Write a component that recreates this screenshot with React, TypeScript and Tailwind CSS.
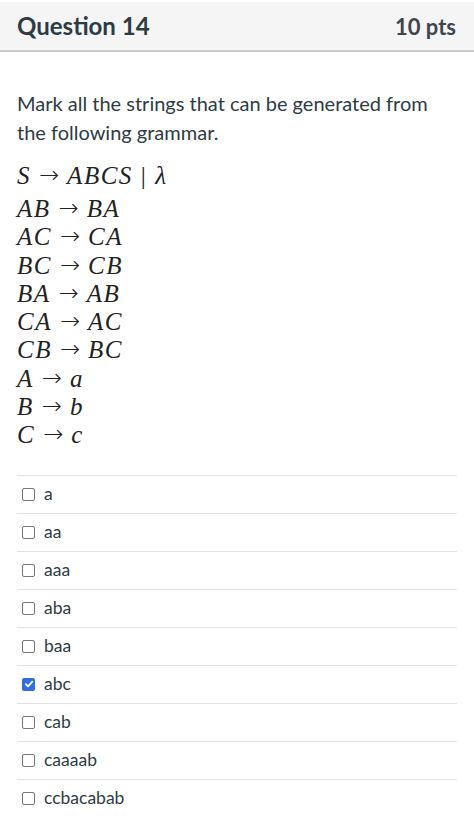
import React from 'react';

const rules: [string, string][] = [
  ['AB', 'BA'],
  ['AC', 'CA'],
  ['BC', 'CB'],
  ['BA', 'AB'],
  ['CA', 'AC'],
  ['CB', 'BC'],
  ['A', 'a'],
  ['B', 'b'],
  ['C', 'c']
];

const answers = ['a', 'aa', 'aaa', 'aba', 'baa', 'abc', 'cab', 'caaaab', 'ccbacabab'];

function Arrow() {
  return (
    <span className="not-italic mx-[8px] tracking-normal font-['DejaVu_Sans',sans-serif] text-[24px] font-light relative top-[-1px]">
      →
    </span>
  );
}

function CheckBox({ checked }: { checked: boolean }) {
  if (checked) {
    return (
      <span className="w-[13px] h-[13px] rounded-[2px] bg-[#2f6fe0] flex items-center justify-center shrink-0">
        <svg width="10" height="10" viewBox="0 0 10 10">
          <path d="M1.8 5.2 L4 7.4 L8.3 2.6" stroke="#fff" strokeWidth="1.8" fill="none" strokeLinecap="round" strokeLinejoin="round" />
        </svg>
      </span>
    );
  }
  return <span className="w-[13px] h-[13px] rounded-[2px] border border-[#767676] bg-white shrink-0"></span>;
}

function App(): JSX.Element {
  return (
    <div className="w-[474px] min-h-[835px] bg-white pt-[2px] font-['Lato','Noto_Sans',sans-serif] text-[#2d3b45]">
      {/* 헤더 */}
      <div className="h-[50px] bg-[#f5f5f5] border-b-2 border-[#c7cdd1] flex items-center justify-between pl-[17px] pr-[18px]">
        <span className="text-[24px] font-bold text-[#2d3b45]">Question 14</span>
        <span className="text-[22px] font-bold text-[#3d464d]">10 pts</span>
      </div>

      <div className="px-[17px]">
        <p className="mt-[37px] text-[20px] leading-[29px] text-[#2d3b45]">
          Mark all the strings that can be generated from the following grammar.
        </p>

        {/* 문법 */}
        <div className="mt-[14px] font-['Liberation_Serif',serif] italic text-[25px] tracking-[1.5px] text-[#222]">
          <div className="leading-[29px] mb-[4px]">
            S<Arrow />ABCS<span className="not-italic mx-[8px]">|</span>λ
          </div>
          {rules.map(([l, r]) => (
            <div key={l + r} className="leading-[28.3px]">
              {l}
              <Arrow />
              {r}
            </div>
          ))}
        </div>

        {/* 보기 */}
        <div className="mt-[25px]">
          {answers.map((a) => (
            <div key={a} className="h-[38px] border-t border-[#e2e2e2] flex items-center pl-[5px]">
              <CheckBox checked={a === 'abc'} />
              <span className="ml-[9px] text-[17.5px] text-[#2d3b45]">{a}</span>
            </div>
          ))}
        </div>
      </div>
    </div>
  );
}

export default App;
